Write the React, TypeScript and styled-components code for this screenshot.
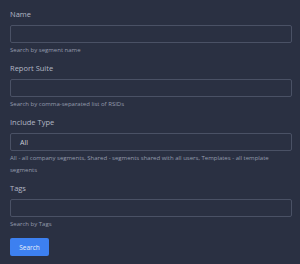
import React from 'react';
import styled, { createGlobalStyle } from 'styled-components';

const GlobalStyle = createGlobalStyle`
  html, body {
    margin: 0;
    padding: 0;
    background: #2a3042;
  }
  body {
    font-family: "Open Sans", "Noto Sans", sans-serif;
  }
`;

type FieldProps = {
  label: string;
  help: string;
  value?: string;
};

const Field = (props: FieldProps) => {
  return (
    <FieldGroup>
      <Label>{props.label}</Label>
      {props.value !== undefined ? (
        <SelectBox>{props.value}</SelectBox>
      ) : (
        <TextInput type="text" />
      )}
      <HelpText>{props.help}</HelpText>
    </FieldGroup>
  );
};

export default function App() {
  return (
    <Page>
      <GlobalStyle />
      <Field label="Name" help="Search by segment name" />
      <Field label="Report Suite" help="Search by comma-separated list of RSIDs" />
      <Field
        label="Include Type"
        value="All"
        help="All - all company segments, Shared - segments shared with all users, Templates - all template segments"
      />
      <Field label="Tags" help="Search by Tags" />
      <SearchButton>Search</SearchButton>
    </Page>
  );
}

const Page = styled.div`
  width: 300px;
  height: 264px;
  box-sizing: border-box;
  padding: 9px 8px 0 10px;
  display: flex;
  flex-direction: column;
  background: #2a3042;
`;

const FieldGroup = styled.div`
  display: flex;
  flex-direction: column;
  margin-bottom: 7px;
`;

const Label = styled.div`
  color: #b2b7c4;
  font-size: 7.5px;
  line-height: 10px;
  margin-bottom: 6px;
`;

const TextInput = styled.input`
  box-sizing: border-box;
  height: 18px;
  width: 100%;
  margin: 0;
  padding: 0 8px;
  background: transparent;
  border: 1px solid #4a5165;
  border-radius: 2px;
  outline: none;
  color: #d0d4de;
  font-family: inherit;
`;

const SelectBox = styled.div`
  box-sizing: border-box;
  height: 18px;
  display: flex;
  align-items: center;
  padding: 0 9px;
  border: 1px solid #4a5165;
  border-radius: 2px;
  color: #c9cdd8;
  font-size: 7px;
`;

const HelpText = styled.div`
  color: #959cad;
  font-size: 6px;
  line-height: 12px;
  margin-top: 1px;
`;

const SearchButton = styled.button`
  align-self: flex-start;
  box-sizing: border-box;
  width: 39px;
  height: 18px;
  margin-top: 1px;
  padding: 0;
  border: none;
  border-radius: 2px;
  background: #3d80f0;
  color: #e6edfb;
  font-family: inherit;
  font-size: 6.5px;
`;
